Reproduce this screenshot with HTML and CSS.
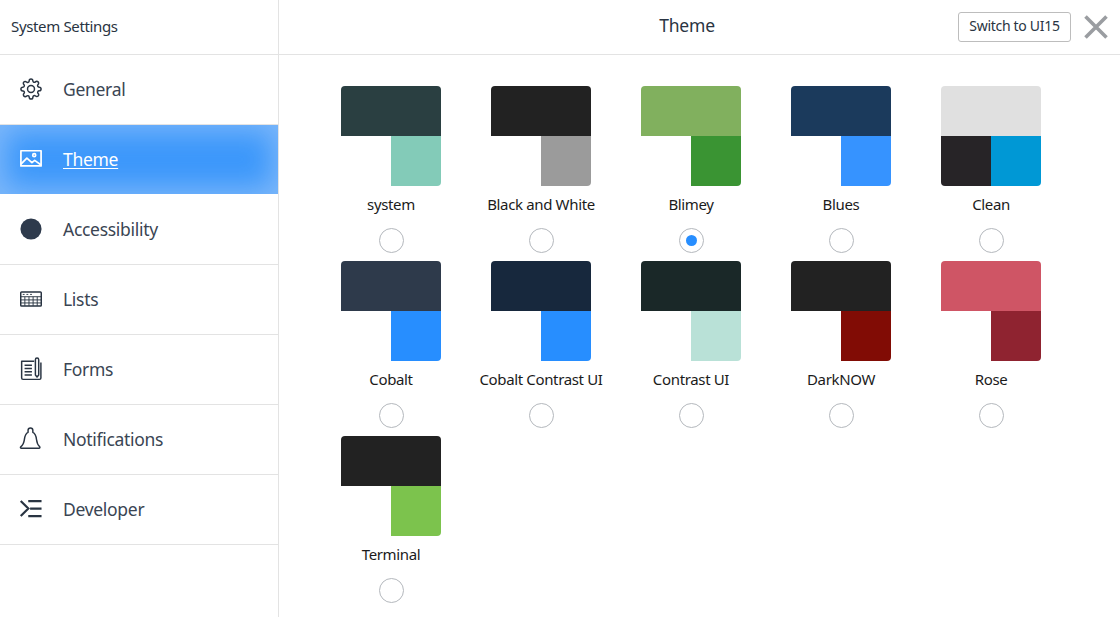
FILE: index.html
```html
<!DOCTYPE html>
<html lang="en">
<head>
<meta charset="utf-8">
<title>System Settings</title>
<link rel="stylesheet" href="styles.css">
</head>
<body>
<div class="app">
  <aside class="sidebar">
    <div class="side-title">System Settings</div>
    <nav class="nav">
      <a class="nav-item"><svg class="ico" viewBox="0 0 24 24"><circle cx="12" cy="12" r="3.800"/><path d="M19.4 15a1.65 1.65 0 0 0 .33 1.82l.06.06a2 2 0 0 1 0 2.83 2 2 0 0 1-2.83 0l-.06-.06a1.65 1.65 0 0 0-1.82-.33 1.65 1.65 0 0 0-1 1.51V21a2 2 0 0 1-2 2 2 2 0 0 1-2-2v-.09A1.65 1.65 0 0 0 9 19.4a1.65 1.65 0 0 0-1.82.33l-.06.06a2 2 0 0 1-2.83 0 2 2 0 0 1 0-2.83l.06-.06a1.65 1.65 0 0 0 .33-1.82 1.65 1.65 0 0 0-1.51-1H3a2 2 0 0 1-2-2 2 2 0 0 1 2-2h.09A1.65 1.65 0 0 0 4.6 9a1.65 1.65 0 0 0-.33-1.82l-.06-.06a2 2 0 0 1 0-2.83 2 2 0 0 1 2.83 0l.06.06a1.65 1.65 0 0 0 1.82.33H9a1.65 1.65 0 0 0 1-1.51V3a2 2 0 0 1 2-2 2 2 0 0 1 2 2v.09a1.65 1.65 0 0 0 1 1.51 1.65 1.65 0 0 0 1.82-.33l.06-.06a2 2 0 0 1 2.83 0 2 2 0 0 1 0 2.83l-.06.06a1.65 1.65 0 0 0-.33 1.82V9a1.65 1.65 0 0 0 1.51 1H21a2 2 0 0 1 2 2 2 2 0 0 1-2 2h-.09a1.65 1.65 0 0 0-1.51 1z"/></svg><span>General</span></a>
      <a class="nav-item active"><svg class="ico wide" viewBox="0 0 24 24"><rect x="1" y="3" width="22" height="16.500"/><path d="M1 17.500l6.500-6.500 5.500 5 3-2.500 7 5"/><circle cx="15.500" cy="7.800" r="1.600"/></svg><span>Theme</span></a>
      <a class="nav-item"><svg class="ico" viewBox="0 0 24 24"><circle class="solid" cx="12" cy="12" r="11.500"/></svg><span>Accessibility</span></a>
      <a class="nav-item"><svg class="ico" viewBox="0 0 24 24"><rect x=".8" y="4.300" width="22.400" height="15.400" rx="1"/><path class="thin" d="M.8 9.500h22.400M.8 13h22.400M.8 16.300h22.400M5.300 9.500v10M9.800 9.500v10M14.300 9.500v10M18.800 9.500v10M3 7h2M7 7h2M11 7h2"/></svg><span>Lists</span></a>
      <a class="nav-item"><svg class="ico" viewBox="0 0 24 24"><path d="M15.500 3.500H1.800v18.300a1.500 1.500 0 0 0 1.500 1.500h18a1.500 1.500 0 0 0 1.500-1.500V5"/><path d="M5 8h8M5 11.500h8M5 15h8M5 18.500h8"/><path d="M16.800 18.500V1.800a1.800 1.800 0 0 1 3.600 0v16.700l-1.800 2.300z"/></svg><span>Forms</span></a>
      <a class="nav-item"><svg class="ico" viewBox="0 0 24 24"><path d="M.8 20.500c2.500-1.800 3.500-4 4-8 .4-3.500 1-6.500 4-7.800V2.500a2.600 2.600 0 0 1 5.200 0v2.200c3 1.300 3.600 4.300 4 7.800.5 4 1.500 6.200 3.500 8 .5.500.2 1.500-.8 1.500H1.500c-1 0-1.300-1-.7-1.500z"/></svg><span>Notifications</span></a>
      <a class="nav-item"><svg class="ico bold" viewBox="0 0 24 24"><path d="M.8 3.300l8.300 8.200-8.300 8.200M9 3.300h14.500M11 11.500h12.500M9 19.700h14.500"/></svg><span>Developer</span></a>
    </nav>
  </aside>
  <main class="main">
    <header class="topbar">
      <h1 class="title">Theme</h1>
      <button class="switch">Switch to UI15</button>
      <svg class="close" viewBox="0 0 24 24"><path d="M1.500 1.500l21 21M22.500 1.500l-21 21"/></svg>
    </header>
    <div class="grid">
      <div class="theme"><div class="swatch"><i class="top" style="background:#2a3f41"></i><i class="blank"></i><i style="background:#83cbb8"></i></div><div class="name">system</div><span class="radio"></span></div>
      <div class="theme"><div class="swatch"><i class="top" style="background:#222222"></i><i class="blank"></i><i style="background:#9b9b9b"></i></div><div class="name">Black and White</div><span class="radio"></span></div>
      <div class="theme"><div class="swatch"><i class="top" style="background:#81b05e"></i><i class="blank"></i><i style="background:#3a9433"></i></div><div class="name">Blimey</div><span class="radio on"></span></div>
      <div class="theme"><div class="swatch"><i class="top" style="background:#1b3a5c"></i><i class="blank"></i><i style="background:#3693ff"></i></div><div class="name">Blues</div><span class="radio"></span></div>
      <div class="theme"><div class="swatch"><i class="top" style="background:#e0e0e0"></i><i style="background:#272427"></i><i style="background:#0098d5"></i></div><div class="name">Clean</div><span class="radio"></span></div>
      <div class="theme"><div class="swatch"><i class="top" style="background:#2e3a4b"></i><i class="blank"></i><i style="background:#278eff"></i></div><div class="name">Cobalt</div><span class="radio"></span></div>
      <div class="theme"><div class="swatch"><i class="top" style="background:#17283d"></i><i class="blank"></i><i style="background:#278eff"></i></div><div class="name">Cobalt Contrast UI</div><span class="radio"></span></div>
      <div class="theme"><div class="swatch"><i class="top" style="background:#1a2828"></i><i class="blank"></i><i style="background:#b9e1d7"></i></div><div class="name">Contrast UI</div><span class="radio"></span></div>
      <div class="theme"><div class="swatch"><i class="top" style="background:#222222"></i><i class="blank"></i><i style="background:#810c05"></i></div><div class="name">DarkNOW</div><span class="radio"></span></div>
      <div class="theme"><div class="swatch"><i class="top" style="background:#cf5565"></i><i class="blank"></i><i style="background:#8f2330"></i></div><div class="name">Rose</div><span class="radio"></span></div>
      <div class="theme"><div class="swatch"><i class="top" style="background:#222222"></i><i class="blank"></i><i style="background:#7cc34d"></i></div><div class="name">Terminal</div><span class="radio"></span></div>
    </div>
  </main>
</div>
</body>
</html>
```
FILE: styles.css
```css
* { box-sizing: border-box; }
html, body { margin: 0; height: 100%; overflow: hidden; }
body { font-family: "Noto Sans", "Liberation Sans", sans-serif; color: #293442; background: #fff; }
.app { display: flex; width: 1120px; height: 617px; }
.sidebar { width: 279px; flex: none; border-right: 1px solid #e3e3e3; }
.side-title { height: 55px; padding: 0 0 2px 11px; display: flex; align-items: center; font-size: 15px; letter-spacing: -.35px; border-bottom: 1px solid #e3e3e3; }
.nav { display: flex; flex-direction: column; }
.nav-item { height: 70px; padding: 0 0 2px 20px; display: flex; align-items: center; gap: 21px; font-size: 17.500px; letter-spacing: -.3px; color: #3a4553; border-bottom: 1px solid #e3e3e3; }
.nav-item.active { color: #fff; background: #3c98fb; border-bottom-color: #fff; box-shadow: inset 0 0 28px 6px rgba(130,185,250,.95); }
.nav-item.active span { text-decoration: underline; text-underline-offset: 2px; }
.ico { width: 22px; height: 22px; flex: none; overflow: visible; fill: none; stroke: currentColor; stroke-width: 1.600; stroke-linejoin: round; color: #293442; }
.active .ico { color: #fff; }
.ico .solid { fill: #2e3a4c; stroke: none; }
.ico .thin { stroke-width: 1; }
.ico.wide { stroke-width: 1.900; }
.ico.bold { stroke-width: 2.400; stroke-linejoin: miter; }
.main { flex: 1; min-width: 0; display: flex; flex-direction: column; }
.topbar { height: 55px; flex: none; display: flex; align-items: center; padding: 0 12px 2px 0; border-bottom: 1px solid #e3e3e3; }
.title { flex: 1; margin: 0 0 2px; padding-left: 137px; text-align: center; font-size: 17.500px; font-weight: 400; letter-spacing: -.2px; color: #293442; }
.switch { width: 113px; height: 30px; margin-top: 2px; padding: 0 0 3px; font: inherit; font-size: 14px; letter-spacing: -.3px; color: #293442; background: #fff; border: 1px solid #bdbdbd; border-radius: 3px; }
.close { width: 24px; height: 24px; margin: 2px 0 0 13px; fill: none; stroke: #9a9da1; stroke-width: 3.600; }
.grid { display: grid; grid-template-columns: repeat(5, 150px); grid-auto-rows: 175px; padding: 31px 0 0 37px; }
.theme { display: flex; flex-direction: column; align-items: center; }
.swatch { width: 100px; height: 100px; display: grid; grid-template-columns: 1fr 1fr; grid-template-rows: 1fr 1fr; border-radius: 4px; overflow: hidden; }
.swatch .top { grid-column: 1 / 3; }
.name { margin-top: 8px; height: 20px; line-height: 20px; font-size: 15px; letter-spacing: -.35px; color: #1b1b1b; white-space: nowrap; }
.radio { margin-top: 14px; width: 25px; height: 25px; border: 1px solid #b4b8bd; border-radius: 50%; display: flex; align-items: center; justify-content: center; background: #fff; }
.radio.on::after { content: ""; width: 11px; height: 11px; border-radius: 50%; background: #278eff; }
```
